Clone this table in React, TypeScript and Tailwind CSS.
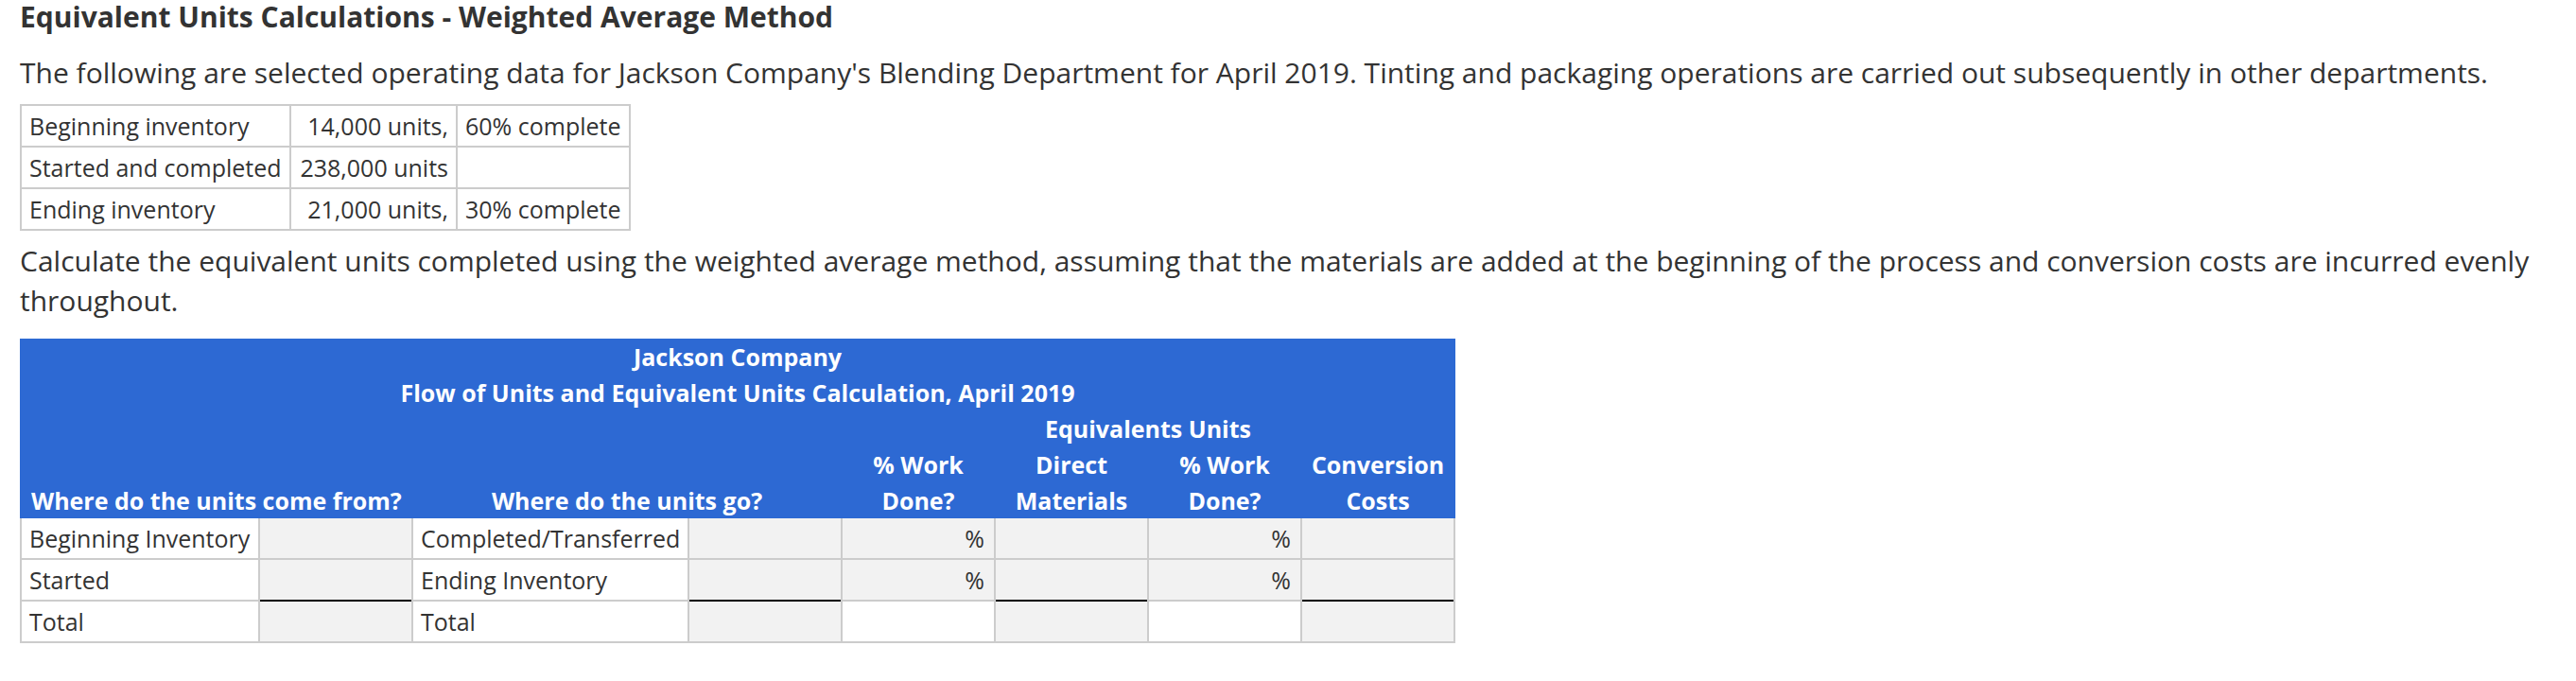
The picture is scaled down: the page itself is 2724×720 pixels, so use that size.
import React from "react"

const cols = "grid-cols-[250px_160px_290px_160px_160px_160px_160px_160px]"

function DataTable() {
  const rows = [
    ["Beginning inventory", "14,000 units,", "60% complete"],
    ["Started and completed", "238,000 units", ""],
    ["Ending inventory", "21,000 units,", "30% complete"],
  ]
  return (
    <div className="mt-[12px] inline-grid grid-cols-[283px_174px_181px] gap-[2px] bg-[#cccccc] p-[2px] text-[25px]">
      {rows.map((r) => (
        <React.Fragment key={r[0]}>
          <div className="h-[42px] bg-white px-2 leading-[42px]">{r[0]}</div>
          <div className="h-[42px] bg-white px-2 text-right leading-[42px]">{r[1]}</div>
          <div className="h-[42px] bg-white px-2 leading-[42px]">{r[2]}</div>
        </React.Fragment>
      ))}
    </div>
  )
}

function Header() {
  return (
    <div className={`grid ${cols} gap-x-[2px] bg-[#2d69d3] px-[2px] text-[25px] font-bold leading-[38px] text-white`}>
      <div className="col-span-8 text-center">Jackson Company</div>
      <div className="col-span-8 text-center">
        Flow of Units and Equivalent Units Calculation, April 2019
      </div>
      <div className="col-span-4" />
      <div className="col-span-4 text-center">Equivalents Units</div>

      <div className="col-span-2 row-span-2 flex items-end whitespace-nowrap pl-[10px]">
        Where do the units come from?
      </div>
      <div className="col-span-2 row-span-2 flex items-end justify-center whitespace-nowrap">
        Where do the units go?
      </div>
      <div className="row-span-2 text-center">% Work<br />Done?</div>
      <div className="row-span-2 text-center">Direct<br />Materials</div>
      <div className="row-span-2 text-center">% Work<br />Done?</div>
      <div className="row-span-2 text-center">Conversion<br />Costs</div>
    </div>
  )
}

function Body() {
  const label = "h-[42px] bg-white px-2 leading-[42px]"
  const input = "h-[42px] bg-[#f2f2f2]"
  const pct = "h-[42px] bg-[#f2f2f2] pr-[10px] text-right leading-[42px]"
  // black sum line above the totals
  const total = "h-[42px] bg-[#f2f2f2] shadow-[0_-2px_0_0_#000]"

  return (
    <div className={`grid ${cols} gap-[2px] bg-[#cccccc] px-[2px] pb-[2px] text-[25px]`}>
      <div className={label}>Beginning Inventory</div>
      <div className={input} />
      <div className={label}>Completed/Transferred</div>
      <div className={input} />
      <div className={pct}>%</div>
      <div className={input} />
      <div className={pct}>%</div>
      <div className={input} />

      <div className={label}>Started</div>
      <div className={input} />
      <div className={label}>Ending Inventory</div>
      <div className={input} />
      <div className={pct}>%</div>
      <div className={input} />
      <div className={pct}>%</div>
      <div className={input} />

      <div className={label}>Total</div>
      <div className={total} />
      <div className={label}>Total</div>
      <div className={total} />
      <div className="h-[42px] bg-white" />
      <div className={total} />
      <div className="h-[42px] bg-white" />
      <div className={total} />
    </div>
  )
}

export default function App() {
  return (
    <div className="min-h-[720px] bg-white px-[21px] font-['Open_Sans',sans-serif] text-[#333333]">
      <h1 className="text-[30px] font-bold leading-[36px]">
        Equivalent Units Calculations - Weighted Average Method
      </h1>

      <p className="mt-[20px] text-[30px] leading-[42px]">
        The following are selected operating data for Jackson Company's Blending Department for April 2019. Tinting and packaging operations are carried out subsequently in other departments.
      </p>

      <DataTable />

      <p className="mt-[11px] text-[30px] leading-[42px]">
        Calculate the equivalent units completed using the weighted average method, assuming that the materials are added at the beginning of the process and conversion costs are incurred evenly throughout.
      </p>

      <div className="mt-[19px] w-[1518px]">
        <Header />
        <Body />
      </div>
    </div>
  )
}
